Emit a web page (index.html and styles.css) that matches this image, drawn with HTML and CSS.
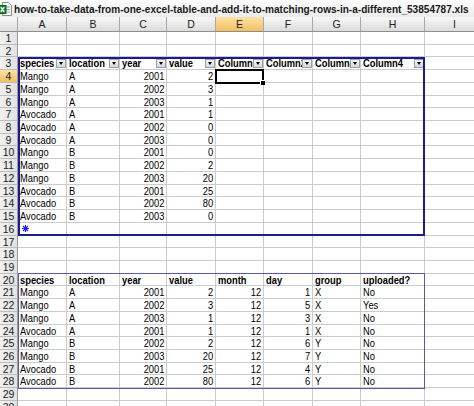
FILE: index.html
```html
<!DOCTYPE html>
<html>
<head>
<meta charset="utf-8">
<link rel="stylesheet" href="styles.css">
</head>
<body>
<div class="titlebar">
  <svg class="xl-icon" width="13" height="14" viewBox="0 0 13 14">
    <path d="M3.5 0.5h6l3 3v10h-9z" fill="#fff" stroke="#8a8a8a"/>
    <path d="M6 5h5M6 7.5h5M6 10h5" stroke="#7fb07f" stroke-width="1"/>
    <rect x="0" y="3.5" width="7" height="8" fill="#1f8a3a" stroke="#0f5a22"/>
    <path d="M1.8 5.2l3.4 4.6M5.2 5.2l-3.4 4.6" stroke="#fff" stroke-width="1.3"/>
  </svg>
  <span class="title">how-to-take-data-from-one-excel-table-and-add-it-to-matching-rows-in-a-different_53854787.xls</span>
</div>
<div class="sheet">
  <div class="r"><div class="ch"></div><div class="ch">A</div><div class="ch">B</div><div class="ch">C</div><div class="ch">D</div><div class="ch hl">E</div><div class="ch">F</div><div class="ch">G</div><div class="ch">H</div><div class="ch">I</div></div>
  <div class="r"><div class="rh">1</div><div></div><div></div><div></div><div></div><div></div><div></div><div></div><div></div><div></div></div>
  <div class="r"><div class="rh">2</div><div></div><div></div><div></div><div></div><div></div><div></div><div></div><div></div><div></div></div>
  <div class="r"><div class="rh">3</div><div class="f"><span><em>species</em></span><i class="dd"></i></div><div class="f"><span><em>location</em></span><i class="dd"></i></div><div class="f"><span><em>year</em></span><i class="dd"></i></div><div class="f"><span><em>value</em></span><i class="dd"></i></div><div class="f"><span><em>Column1</em></span><i class="dd"></i></div><div class="f"><span><em>Column2</em></span><i class="dd"></i></div><div class="f"><span><em>Column3</em></span><i class="dd"></i></div><div class="f"><span><em>Column4</em></span><i class="dd"></i></div><div></div></div>
  <div class="r"><div class="rh hl">4</div><div><span>Mango</span></div><div><span>A</span></div><div class="n"><span>2001</span></div><div class="n"><span>2</span></div><div></div><div></div><div></div><div></div><div></div></div>
  <div class="r"><div class="rh">5</div><div><span>Mango</span></div><div><span>A</span></div><div class="n"><span>2002</span></div><div class="n"><span>3</span></div><div></div><div></div><div></div><div></div><div></div></div>
  <div class="r"><div class="rh">6</div><div><span>Mango</span></div><div><span>A</span></div><div class="n"><span>2003</span></div><div class="n"><span>1</span></div><div></div><div></div><div></div><div></div><div></div></div>
  <div class="r"><div class="rh">7</div><div><span>Avocado</span></div><div><span>A</span></div><div class="n"><span>2001</span></div><div class="n"><span>1</span></div><div></div><div></div><div></div><div></div><div></div></div>
  <div class="r"><div class="rh">8</div><div><span>Avocado</span></div><div><span>A</span></div><div class="n"><span>2002</span></div><div class="n"><span>0</span></div><div></div><div></div><div></div><div></div><div></div></div>
  <div class="r"><div class="rh">9</div><div><span>Avocado</span></div><div><span>A</span></div><div class="n"><span>2003</span></div><div class="n"><span>0</span></div><div></div><div></div><div></div><div></div><div></div></div>
  <div class="r"><div class="rh">10</div><div><span>Mango</span></div><div><span>B</span></div><div class="n"><span>2001</span></div><div class="n"><span>0</span></div><div></div><div></div><div></div><div></div><div></div></div>
  <div class="r"><div class="rh">11</div><div><span>Mango</span></div><div><span>B</span></div><div class="n"><span>2002</span></div><div class="n"><span>2</span></div><div></div><div></div><div></div><div></div><div></div></div>
  <div class="r"><div class="rh">12</div><div><span>Mango</span></div><div><span>B</span></div><div class="n"><span>2003</span></div><div class="n"><span>20</span></div><div></div><div></div><div></div><div></div><div></div></div>
  <div class="r"><div class="rh">13</div><div><span>Avocado</span></div><div><span>B</span></div><div class="n"><span>2001</span></div><div class="n"><span>25</span></div><div></div><div></div><div></div><div></div><div></div></div>
  <div class="r"><div class="rh">14</div><div><span>Avocado</span></div><div><span>B</span></div><div class="n"><span>2002</span></div><div class="n"><span>80</span></div><div></div><div></div><div></div><div></div><div></div></div>
  <div class="r"><div class="rh">15</div><div><span>Avocado</span></div><div><span>B</span></div><div class="n"><span>2003</span></div><div class="n"><span>0</span></div><div></div><div></div><div></div><div></div><div></div></div>
  <div class="r"><div class="rh">16</div><div class="ins"><svg width="7" height="7" viewBox="0 0 7 7"><path d="M3.5 0v7M0 3.5h7M1 1l5 5M6 1l-5 5" stroke="#1a1aff" stroke-width="1.1"/></svg></div><div></div><div></div><div></div><div></div><div></div><div></div><div></div><div></div></div>
  <div class="r"><div class="rh">17</div><div></div><div></div><div></div><div></div><div></div><div></div><div></div><div></div><div></div></div>
  <div class="r"><div class="rh">18</div><div></div><div></div><div></div><div></div><div></div><div></div><div></div><div></div><div></div></div>
  <div class="r"><div class="rh">19</div><div></div><div></div><div></div><div></div><div></div><div></div><div></div><div></div><div></div></div>
  <div class="r"><div class="rh">20</div><div class="b"><span>species</span></div><div class="b"><span>location</span></div><div class="b"><span>year</span></div><div class="b"><span>value</span></div><div class="b"><span>month</span></div><div class="b"><span>day</span></div><div class="b"><span>group</span></div><div class="b"><span>uploaded?</span></div><div></div></div>
  <div class="r"><div class="rh">21</div><div><span>Mango</span></div><div><span>A</span></div><div class="n"><span>2001</span></div><div class="n"><span>2</span></div><div class="n"><span>12</span></div><div class="n"><span>1</span></div><div><span>X</span></div><div><span>No</span></div><div></div></div>
  <div class="r"><div class="rh">22</div><div><span>Mango</span></div><div><span>A</span></div><div class="n"><span>2002</span></div><div class="n"><span>3</span></div><div class="n"><span>12</span></div><div class="n"><span>5</span></div><div><span>X</span></div><div><span>Yes</span></div><div></div></div>
  <div class="r"><div class="rh">23</div><div><span>Mango</span></div><div><span>A</span></div><div class="n"><span>2003</span></div><div class="n"><span>1</span></div><div class="n"><span>12</span></div><div class="n"><span>3</span></div><div><span>X</span></div><div><span>No</span></div><div></div></div>
  <div class="r"><div class="rh">24</div><div><span>Avocado</span></div><div><span>A</span></div><div class="n"><span>2001</span></div><div class="n"><span>1</span></div><div class="n"><span>12</span></div><div class="n"><span>1</span></div><div><span>X</span></div><div><span>No</span></div><div></div></div>
  <div class="r"><div class="rh">25</div><div><span>Mango</span></div><div><span>B</span></div><div class="n"><span>2002</span></div><div class="n"><span>2</span></div><div class="n"><span>12</span></div><div class="n"><span>6</span></div><div><span>Y</span></div><div><span>No</span></div><div></div></div>
  <div class="r"><div class="rh">26</div><div><span>Mango</span></div><div><span>B</span></div><div class="n"><span>2003</span></div><div class="n"><span>20</span></div><div class="n"><span>12</span></div><div class="n"><span>7</span></div><div><span>Y</span></div><div><span>No</span></div><div></div></div>
  <div class="r"><div class="rh">27</div><div><span>Avocado</span></div><div><span>B</span></div><div class="n"><span>2001</span></div><div class="n"><span>25</span></div><div class="n"><span>12</span></div><div class="n"><span>4</span></div><div><span>Y</span></div><div><span>No</span></div><div></div></div>
  <div class="r"><div class="rh">28</div><div><span>Avocado</span></div><div><span>B</span></div><div class="n"><span>2002</span></div><div class="n"><span>80</span></div><div class="n"><span>12</span></div><div class="n"><span>6</span></div><div><span>Y</span></div><div><span>No</span></div><div></div></div>
  <div class="r"><div class="rh">29</div><div></div><div></div><div></div><div></div><div></div><div></div><div></div><div></div><div></div></div>
  <div class="r"><div class="rh">30</div><div></div><div></div><div></div><div></div><div></div><div></div><div></div><div></div><div></div></div>
  <div class="list active"></div>
  <div class="list second"></div>
  <div class="cursor"></div>
</div>
</body>
</html>
```

FILE: styles.css
```css
html, body {
  margin: 0;
  padding: 0;
}
body {
  width: 474px;
  height: 406px;
  overflow: hidden;
  background: #fff;
  font-family: "Liberation Sans", Arial, sans-serif;
}
.titlebar {
  height: 17px;
  display: flex;
  align-items: center;
  gap: 2px;
  background: linear-gradient(#fdfdfd, #ececec);
  white-space: nowrap;
  overflow: hidden;
}
.xl-icon {
  flex: none;
  margin-left: -1px;
}
.title {
  display: inline-block;
  font-family: "Liberation Sans", Arial, sans-serif;
  font-weight: bold;
  font-size: 11.5px;
  color: #1a1a1a;
  transform: scaleX(0.875);
  transform-origin: 0 50%;
}
.sheet {
  position: relative;
  display: grid;
  grid-template-columns: 18px 49px 53px 47px 49px 48px 49px 48px 64px 60px;
  grid-template-rows: 15px;
  grid-auto-rows: 12.73px;
  font-family: "Liberation Sans", Arial, sans-serif;
  font-size: 11px;
  color: #000;
}
.r {
  display: contents;
}
.r > div {
  box-sizing: border-box;
  border-right: 1px solid #cbcbcb;
  border-bottom: 1px solid #cbcbcb;
  padding: 0 2px;
  line-height: 13px;
  white-space: nowrap;
}
.r > div > span,
.f em {
  display: inline-block;
  font-style: normal;
  transform: scaleX(0.85);
  transform-origin: 0 50%;
}
.r > .n {
  text-align: right;
}
.r > .n > span {
  transform-origin: 100% 50%;
}
.r > .b {
  font-weight: bold;
}
.r > .ch {
  background: linear-gradient(#f8f8f8, #dcdcdc);
  border-right: 1px solid #a9a9a9;
  border-bottom: 1px solid #8d8d8d;
  font-size: 10.5px;
  line-height: 14px;
  text-align: center;
  color: #222;
}
.r > .rh {
  background: linear-gradient(90deg, #f1f1f1, #e2e2e2);
  border-right: 1px solid #9c9c9c;
  border-bottom: 1px solid #bdbdbd;
  font-size: 10.5px;
  text-align: center;
  padding: 0;
  color: #222;
}
.r > .hl {
  background: linear-gradient(#fbe2a9, #f3bf60);
}
.r > .f {
  display: flex;
  align-items: center;
  padding-right: 0;
  font-weight: bold;
}
.r > .f > span {
  flex: 1;
  min-width: 0;
  overflow: hidden;
  line-height: 13px;
  transform: none;
}
.dd {
  flex: none;
  position: relative;
  width: 10px;
  height: 9px;
  box-sizing: border-box;
  border: 1px solid #96a0ad;
  background: linear-gradient(#fafafa, #d3d7dd);
}
.dd::after {
  content: "";
  position: absolute;
  left: 1.5px;
  top: 2.5px;
  border-left: 2.5px solid transparent;
  border-right: 2.5px solid transparent;
  border-top: 3px solid #000;
}
.r > .ins {
  display: flex;
  align-items: center;
  padding-left: 4px;
}
.list {
  position: absolute;
  inset: 0;
  box-sizing: border-box;
  pointer-events: none;
  grid-column: 2 / 10;
}
.list.active {
  grid-row: 4 / 18;
  border: 2px solid #1c1c8e;
}
.list.second {
  grid-row: 21 / 30;
  border: 1px solid #5a5aa6;
  top: -1px;
  bottom: -1px;
}
.cursor {
  position: absolute;
  inset: -1px 0 -1px -1px;
  grid-column: 6 / 7;
  grid-row: 5 / 6;
  border: 2px solid #000;
  pointer-events: none;
}
.cursor::after {
  content: "";
  position: absolute;
  right: -3px;
  bottom: -3px;
  width: 4px;
  height: 4px;
  background: #000;
  border-left: 1px solid #fff;
  border-top: 1px solid #fff;
}
```
